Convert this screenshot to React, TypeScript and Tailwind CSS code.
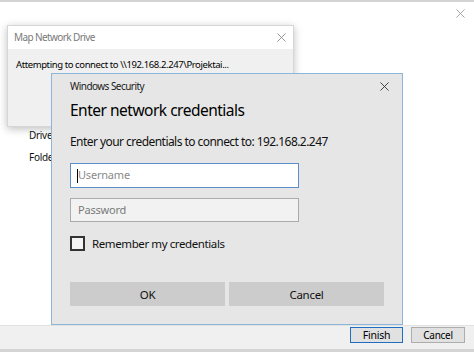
import React from "react";

function CloseIcon({ className }: { className: string }) {
  return (
    <svg viewBox="0 0 10 10" className={className} fill="none" stroke="currentColor" strokeWidth="1">
      <path d="M0.5 0.5 L9.5 9.5 M9.5 0.5 L0.5 9.5" />
    </svg>
  );
}

function MapDriveDialog() {
  return (
    <div className="absolute left-[7px] top-[25px] w-[287px] h-[102px] flex flex-col border border-[#d6d6d6] shadow-[0_2px_8px_rgba(0,0,0,0.25)]">
      <div className="h-[23px] bg-white flex items-center justify-between pl-[6px] pr-[7px]">
        <span className="text-[10px] tracking-[-0.6px] text-[#7a7a7a]">Map Network Drive</span>
        <CloseIcon className="w-[9px] h-[9px] text-[#8a8a8a]" />
      </div>
      <div className="flex-1 bg-[#f0f0f0] px-[8px] pt-[9px]">
        <p className="text-[9.5px] tracking-[-0.4px] text-black leading-[14px] whitespace-nowrap">
          Attempting to connect to \\192.168.2.247\Projektai...
        </p>
      </div>
    </div>
  );
}

function SecurityDialog() {
  return (
    <div className="absolute left-[51px] top-[73px] w-[352px] h-[252px] bg-[#e6e6e6] border border-[#8ab6d9] flex flex-col px-[18px]">
      <div className="flex items-center justify-between pt-[5px] h-[20px] mr-[-5px]">
        <span className="text-[10px] tracking-[-0.55px] text-[#1a1a1a]">Windows Security</span>
        <CloseIcon className="w-[9px] h-[9px] text-[#333]" />
      </div>
      <h1 className="text-[15.5px] tracking-[-0.5px] leading-[22px] text-black mt-[5px]">Enter network credentials</h1>
      <p className="text-[12px] tracking-[-0.55px] leading-[16px] text-[#111] mt-[13px]">
        Enter your credentials to connect to: 192.168.2.247
      </p>
      <div className="mt-[13px] w-[229px] h-[25px] bg-white border border-[#5b8fc9] flex items-center pl-[6px]">
        <span className="w-px h-[14px] bg-black" />
        <span className="text-[11px] tracking-[-0.2px] text-[#8a8a8a]">Username</span>
      </div>
      <div className="mt-[10px] w-[229px] h-[24px] bg-[#f2f2f2] border border-[#ababab] flex items-center pl-[7px]">
        <span className="text-[11px] tracking-[-0.2px] text-[#7a7a7a]">Password</span>
      </div>
      <label className="mt-[13px] flex items-center gap-[7px]">
        <span className="w-[15px] h-[15px] border-2 border-[#333] bg-[#f4f4f4]" />
        <span className="text-[11.5px] tracking-[-0.4px] text-[#111]">Remember my credentials</span>
      </label>
      <div className="mt-[30px] flex gap-[4px]">
        <button className="w-[155px] h-[24px] bg-[#cccccc] text-[11.5px] tracking-[-0.3px] text-[#111]">OK</button>
        <button className="w-[155px] h-[24px] bg-[#cccccc] text-[11.5px] tracking-[-0.3px] text-[#111]">Cancel</button>
      </div>
    </div>
  );
}

export default function App() {
  return (
    <div className="relative w-[474px] h-[352px] overflow-hidden bg-white flex flex-col" style={{ fontFamily: '"Noto Sans", sans-serif' }}>
      <div className="h-[2px] bg-[#d4d4d4]" />
      <div className="flex-1 relative">
        <div className="flex justify-end pr-[9px] pt-[7px]">
          <CloseIcon className="w-[9px] h-[9px] text-[#9a9a9a]" />
        </div>
        <div className="pl-[29px] pt-[110px] flex flex-col gap-[8px] text-[10px] tracking-[-0.3px] text-[#111] leading-[14px]">
          <span>Drive:</span>
          <span>Folder:</span>
        </div>
      </div>
      <div className="h-[24px] bg-[#f0f0f0] border-t border-[#e2e2e2] flex justify-end gap-[8px] pr-[9px] pt-[1px]">
        <button className="w-[53px] h-[16px] bg-[#e1e1e1] border border-[#1e6fc2] text-[10.5px] tracking-[-0.2px] leading-[12px] text-black">Finish</button>
        <button className="w-[54px] h-[16px] bg-[#e1e1e1] border border-[#adadad] text-[10px] tracking-[-0.3px] leading-[12px] text-black">Cancel</button>
      </div>
      <div className="h-[3px] bg-[#d4d4d4]" />
      <MapDriveDialog />
      <SecurityDialog />
    </div>
  );
}
